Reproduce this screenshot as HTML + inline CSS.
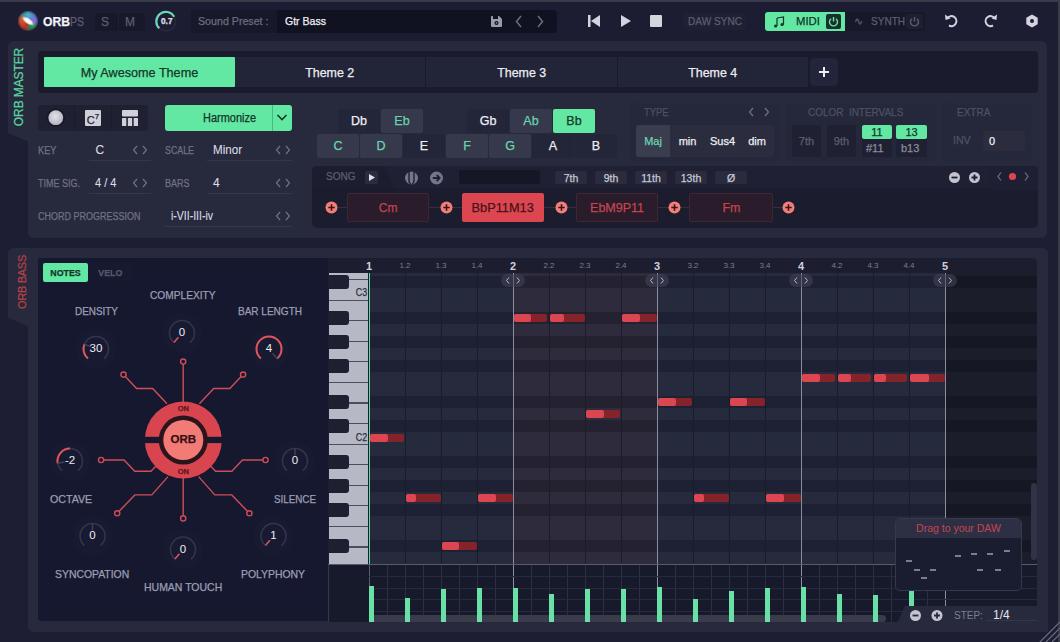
<!DOCTYPE html><html><head><meta charset="utf-8"><style>
*{margin:0;padding:0;box-sizing:border-box}
html,body{width:1060px;height:642px;overflow:hidden;background:#1d1e34;font-family:"Liberation Sans",sans-serif}
.a{position:absolute}
.t{position:absolute;white-space:nowrap;line-height:1;-webkit-text-stroke:0.25px currentColor}
.c span{-webkit-text-stroke:0.25px currentColor}
.c{display:flex;align-items:center;justify-content:center}
</style></head><body><div class="a" style="left:0px;top:0px;width:1060px;height:2px;background:#3a3b4a;"></div>
<div class="a" style="left:1058px;top:0px;width:2px;height:642px;background:#3a3b4a;"></div>
<div class="a" style="left:0px;top:2px;width:1058px;height:39px;background:#1c1d33;"></div>
<div class="a" style="left:18px;top:11px;width:20px;height:20px;border-radius:50%;overflow:hidden;background:conic-gradient(from 0deg,#4ab0c8 0deg,#6a7ad8 60deg,#8a70d0 95deg,#3a9a60 135deg,#2a8a48 160deg,#c03030 200deg,#d04a28 250deg,#c86040 290deg,#3aa0a8 330deg,#4ab0c8 360deg);box-shadow:inset 0 0 2px 1px rgba(20,20,40,0.6)"><div style="position:absolute;left:3px;top:7px;width:14px;height:6px;border-radius:50%;background:radial-gradient(ellipse at center,#ffffff 0,#f4f0f0 40%,rgba(255,255,255,0) 75%);transform:rotate(35deg)"></div></div>
<div class="t" id="fit0" style="left:42.5px;top:16.0px;height:12px;line-height:12px;color:#f2f2f6;font-size:12px;transform-origin:0 50%;transform:scaleX(1.0123);font-weight:bold">ORB</div>
<div class="t" id="fit1" style="left:69.5px;top:16.0px;height:12px;line-height:12px;color:#5c5e70;font-size:12px;transform-origin:0 50%;transform:scaleX(0.8741);">PS</div>
<div class="a" style="left:95px;top:13px;width:50px;height:18px;background:#17182a;border-radius:2px"></div>
<div class="a" style="left:118px;top:12px;width:1px;height:19px;background:#1f2033;"></div>
<div class="t" style="left:101px;top:15.5px;height:12px;line-height:12px;color:#5c5e70;font-size:12px;">S</div>
<div class="t" style="left:125px;top:15.5px;height:12px;line-height:12px;color:#5c5e70;font-size:12px;">M</div>
<svg class="a" style="left:154px;top:10px" width="24" height="24" viewBox="0 0 24 24">
<circle cx="12" cy="11.5" r="9.5" fill="none" stroke="#25273a" stroke-width="2"/>
<path d="M5.3 18.2 A9.5 9.5 0 1 1 20.2 6.8" fill="none" stroke="#6cd6b4" stroke-width="2.2"/>
</svg>
<div class="t" id="fit2" style="left:160.5px;top:17.25px;height:8.5px;line-height:8.5px;color:#e0e0ea;font-size:8.5px;transform-origin:0 50%;transform:scaleX(0.9723);font-weight:bold">0.7</div>
<div class="a" style="left:191px;top:10px;width:366px;height:23px;background:#101121;border-radius:4px"></div>
<div class="a" style="left:191px;top:10px;width:86px;height:23px;background:#17182a;border-radius:4px 0 0 4px"></div>
<div class="t" id="fit3" style="left:197.5px;top:16.0px;height:11px;line-height:11px;color:#6c6e80;font-size:11px;transform-origin:0 50%;transform:scaleX(0.9687);">Sound Preset :</div>
<div class="t" id="fit4" style="left:284.5px;top:16.0px;height:11px;line-height:11px;color:#eeeef4;font-size:11px;transform-origin:0 50%;transform:scaleX(0.9580);">Gtr Bass</div>
<svg class="a" style="left:490px;top:15px" width="13" height="13" viewBox="0 0 13 13">
<path d="M1 2 a1 1 0 0 1 1-1 h7 l3 3 v7 a1 1 0 0 1-1 1 h-9 a1 1 0 0 1-1-1z" fill="#9a9cab"/>
<rect x="3" y="1" width="5" height="3" fill="#101121"/>
<circle cx="6.5" cy="8" r="2" fill="#101121"/><circle cx="6.5" cy="8" r="0.8" fill="#9a9cab"/>
</svg>
<svg class="a" style="left:513px;top:14px" width="34" height="15" viewBox="0 0 34 15">
<path d="M8 2 L3.5 7.5 L8 13" fill="none" stroke="#6c6e80" stroke-width="1.5"/>
<path d="M25 2 L29.5 7.5 L25 13" fill="none" stroke="#6c6e80" stroke-width="1.5"/>
</svg>
<svg class="a" style="left:586px;top:13px" width="80" height="16" viewBox="0 0 80 16">
<rect x="2" y="2" width="2.5" height="12" fill="#d4d4de"/>
<path d="M14 2 L14 14 L5 8z" fill="#d4d4de"/>
<path d="M35 2 L45 8 L35 14z" fill="#d4d4de"/>
<rect x="64" y="2" width="12" height="12" rx="1" fill="#d4d4de"/>
</svg>
<div class="a" style="left:683px;top:13px;width:63px;height:17px;background:#1f2033;border-radius:2px"></div>
<div class="t" id="fit5" style="left:687.5px;top:16.25px;height:10.5px;line-height:10.5px;color:#5c5e70;font-size:10.5px;transform-origin:0 50%;transform:scaleX(0.9608);">DAW SYNC</div>
<div class="a" style="left:765px;top:12px;width:80px;height:19px;background:#62e8a2;border-radius:3px 0 0 3px"></div>
<div class="a" style="left:845px;top:12px;width:80px;height:19px;background:#17182a;border-radius:0 3px 3px 0"></div>
<svg class="a" style="left:773px;top:15px" width="12" height="13" viewBox="0 0 12 13">
<path d="M4 3 L10.5 2 L10.5 9.5 M4 3 L4 11" fill="none" stroke="#14352a" stroke-width="1.2"/>
<circle cx="2.6" cy="11" r="1.6" fill="#14352a"/><circle cx="9.1" cy="9.5" r="1.6" fill="#14352a"/>
</svg>
<div class="t" id="fit6" style="left:795.5px;top:16.0px;height:11px;line-height:11px;color:#14352a;font-size:11px;transform-origin:0 50%;transform:scaleX(1.0330);">MIDI</div>
<div class="a" style="left:826px;top:14px;width:15px;height:15px;background:#1c2e2c;border-radius:2px"></div>
<svg class="a" style="left:828px;top:16px" width="11" height="11" viewBox="0 0 11 11">
<path d="M3 2.8 A4 4 0 1 0 8 2.8" fill="none" stroke="#62e8a2" stroke-width="1.4"/><path d="M5.5 1 V5.5" stroke="#62e8a2" stroke-width="1.4"/>
</svg>
<div class="t" style="left:854px;top:16.0px;height:11px;line-height:11px;color:#5c5e70;font-size:11px;">∿</div>
<div class="t" id="fit7" style="left:870.5px;top:16.0px;height:11px;line-height:11px;color:#5c5e70;font-size:11px;transform-origin:0 50%;transform:scaleX(0.9120);">SYNTH</div>
<div class="a" style="left:906px;top:14px;width:17px;height:15px;background:#1e1f31;border-radius:2px"></div>
<svg class="a" style="left:909px;top:16px" width="11" height="11" viewBox="0 0 11 11">
<path d="M3 2.8 A4 4 0 1 0 8 2.8" fill="none" stroke="#5c5e70" stroke-width="1.4"/><path d="M5.5 1 V5.5" stroke="#5c5e70" stroke-width="1.4"/>
</svg>
<svg class="a" style="left:943px;top:12px" width="16" height="16" viewBox="0 0 16 16">
<path d="M4.5 6 A5 5 0 1 1 6 13.5" fill="none" stroke="#d4d4de" stroke-width="2"/><path d="M2 2.5 L2.5 8 L7.5 6.5z" fill="#d4d4de"/>
</svg>
<svg class="a" style="left:983px;top:12px" width="16" height="16" viewBox="0 0 16 16">
<path d="M11.5 6 A5 5 0 1 0 10 13.5" fill="none" stroke="#d4d4de" stroke-width="2"/><path d="M14 2.5 L13.5 8 L8.5 6.5z" fill="#d4d4de"/>
</svg>
<svg class="a" style="left:1024px;top:13px" width="16" height="16" viewBox="0 0 16 16">
<path d="M8 1.5 L13.7 4.8 V11.2 L8 14.5 L2.3 11.2 V4.8z" fill="#d4d4de"/><circle cx="8" cy="8" r="2" fill="#1b1c2e"/>
</svg>
<div class="a" style="left:28px;top:41px;width:1019px;height:197px;background:#272a3c;border-radius:0 6px 6px 6px"></div>
<div class="a" style="left:8px;top:41px;width:21px;height:101px;background:#272a3c;border-radius:6px 0 0 0;clip-path:polygon(0 0,100% 0,100% 100%,0 91%)"></div>
<div class="t" style="left:19.2px;top:87px;transform:translate(-50%,-50%) rotate(-90deg);color:#5ad4a0;font-size:12px;letter-spacing:-0.1px">ORB MASTER</div>
<div class="a" style="left:38px;top:51px;width:1000px;height:42px;background:#1a1b2c;border-radius:4px"></div>
<div class="a c" style="left:44px;top:57px;width:191px;height:30px;background:#62e8a2;color:#14352a;font-size:13px;border-radius:1px"><span id="fit8" style="display:inline-block;transform:scaleX(0.9718);margin-top:1px">My Awesome Theme</span></div>
<div class="a c" style="left:235px;top:57px;width:190px;height:30px;background:#222437;color:#eeeef4;font-size:13px;"><span id="fit9" style="display:inline-block;transform:scaleX(0.9549);margin-top:1px">Theme 2</span></div>
<div class="a c" style="left:426px;top:57px;width:191px;height:30px;background:#222437;color:#eeeef4;font-size:13px;"><span id="fit10" style="display:inline-block;transform:scaleX(0.9549);margin-top:1px">Theme 3</span></div>
<div class="a c" style="left:618px;top:57px;width:190px;height:30px;background:#222437;color:#eeeef4;font-size:13px;"><span id="fit11" style="display:inline-block;transform:scaleX(0.9549);margin-top:1px">Theme 4</span></div>
<div class="a" style="left:425px;top:57px;width:1px;height:29px;background:#18192a;"></div>
<div class="a" style="left:617px;top:57px;width:1px;height:29px;background:#18192a;"></div>
<div class="a" style="left:810px;top:58px;width:28px;height:28px;background:#23263a;border-radius:4px"></div>
<svg class="a" style="left:818px;top:66px" width="12" height="12" viewBox="0 0 12 12"><path d="M1 6 H11 M6 1 V11" stroke="#ececf4" stroke-width="2"/></svg>
<div class="a" style="left:38px;top:105px;width:110px;height:26px;background:#1f2031;border-radius:3px"></div>
<div class="a" style="left:74px;top:105px;width:1px;height:26px;background:#1a1b2b;"></div>
<div class="a" style="left:111px;top:105px;width:1px;height:26px;background:#1a1b2b;"></div>
<svg class="a" style="left:45px;top:107px" width="22" height="22" viewBox="0 0 22 22"><circle cx="10.8" cy="10.7" r="9.2" fill="#171828"/><defs><radialGradient id="cg" cx="0.45" cy="0.4" r="0.6"><stop offset="0" stop-color="#e2e2ea"/><stop offset="1" stop-color="#b4b4c2"/></radialGradient></defs><circle cx="10.8" cy="10.7" r="7.4" fill="url(#cg)"/></svg>
<div class="a c" style="left:85px;top:110px;width:16px;height:16px;background:#d0d0dc;color:#1a1b2c;font-size:11px;border-radius:1px"><span style="margin-top:1px">C<sup style="font-size:8px">7</sup></span></div>
<svg class="a" style="left:122px;top:110px" width="16" height="16" viewBox="0 0 16 16">
<rect x="0" y="0" width="16" height="6.5" rx="1" fill="#d0d0dc"/>
<rect x="0" y="8" width="4.3" height="8" rx="0.5" fill="#d0d0dc"/>
<rect x="5.85" y="8" width="4.3" height="8" fill="#d0d0dc"/>
<rect x="11.7" y="8" width="4.3" height="8" rx="0.5" fill="#d0d0dc"/>
</svg>
<div class="a" style="left:165px;top:105px;width:127px;height:26px;background:#62e8a2;border-radius:3px"></div>
<div class="a" style="left:272px;top:105px;width:1px;height:26px;background:#4ab884;"></div>
<div class="t" id="fit12" style="left:202.5px;top:112.0px;height:12px;line-height:12px;color:#14352a;font-size:12px;transform-origin:0 50%;transform:scaleX(0.9133);">Harmonize</div>
<svg class="a" style="left:276px;top:113px" width="12" height="9" viewBox="0 0 12 9"><path d="M1.5 2 L6 6.5 L10.5 2" fill="none" stroke="#14352a" stroke-width="1.6"/></svg>
<div class="t" id="fit13" style="left:37.5px;top:146.0px;height:10px;line-height:10px;color:#6f7184;font-size:10px;transform-origin:0 50%;transform:scaleX(0.9243);">KEY</div>
<div class="t" style="left:95.5px;top:144.0px;height:12px;line-height:12px;color:#dcdce6;font-size:12px;-webkit-text-stroke:0.1px currentColor">C</div>
<svg class="a" style="left:132px;top:144px" width="16" height="12" viewBox="0 0 16 12"><path d="M5 2 L1.5 6 L5 10" fill="none" stroke="#6f7184" stroke-width="1.2"/><path d="M11 2 L14.5 6 L11 10" fill="none" stroke="#6f7184" stroke-width="1.2"/></svg>
<div class="a" style="left:89px;top:160px;width:62px;height:1px;background:#34364a;"></div>
<div class="t" id="fit14" style="left:164.5px;top:146.0px;height:10px;line-height:10px;color:#6f7184;font-size:10px;transform-origin:0 50%;transform:scaleX(0.8842);">SCALE</div>
<div class="t" id="fit15" style="left:212.5px;top:144.0px;height:12px;line-height:12px;color:#dcdce6;font-size:12px;transform-origin:0 50%;transform:scaleX(0.9662);-webkit-text-stroke:0.1px currentColor">Minor</div>
<svg class="a" style="left:275px;top:144px" width="16" height="12" viewBox="0 0 16 12"><path d="M5 2 L1.5 6 L5 10" fill="none" stroke="#6f7184" stroke-width="1.2"/><path d="M11 2 L14.5 6 L11 10" fill="none" stroke="#6f7184" stroke-width="1.2"/></svg>
<div class="a" style="left:207px;top:160px;width:85px;height:1px;background:#34364a;"></div>
<div class="t" id="fit16" style="left:37.5px;top:179.0px;height:10px;line-height:10px;color:#6f7184;font-size:10px;transform-origin:0 50%;transform:scaleX(0.8999);">TIME SIG.</div>
<div class="t" id="fit17" style="left:95.0px;top:177.0px;height:12px;line-height:12px;color:#dcdce6;font-size:12px;transform-origin:0 50%;transform:scaleX(0.9204);-webkit-text-stroke:0.1px currentColor">4 / 4</div>
<svg class="a" style="left:132px;top:177px" width="16" height="12" viewBox="0 0 16 12"><path d="M5 2 L1.5 6 L5 10" fill="none" stroke="#6f7184" stroke-width="1.2"/><path d="M11 2 L14.5 6 L11 10" fill="none" stroke="#6f7184" stroke-width="1.2"/></svg>
<div class="a" style="left:89px;top:193px;width:62px;height:1px;background:#34364a;"></div>
<div class="t" id="fit18" style="left:165.0px;top:179.0px;height:10px;line-height:10px;color:#6f7184;font-size:10px;transform-origin:0 50%;transform:scaleX(0.8996);">BARS</div>
<div class="t" style="left:213px;top:177.0px;height:12px;line-height:12px;color:#dcdce6;font-size:12px;-webkit-text-stroke:0.1px currentColor">4</div>
<svg class="a" style="left:275px;top:177px" width="16" height="12" viewBox="0 0 16 12"><path d="M5 2 L1.5 6 L5 10" fill="none" stroke="#6f7184" stroke-width="1.2"/><path d="M11 2 L14.5 6 L11 10" fill="none" stroke="#6f7184" stroke-width="1.2"/></svg>
<div class="a" style="left:207px;top:193px;width:85px;height:1px;background:#34364a;"></div>
<div class="t" id="fit19" style="left:37.5px;top:212.0px;height:10px;line-height:10px;color:#6f7184;font-size:10px;transform-origin:0 50%;transform:scaleX(0.8999);">CHORD PROGRESSION</div>
<div class="t" id="fit20" style="left:171.0px;top:210.0px;height:12px;line-height:12px;color:#dcdce6;font-size:12px;transform-origin:0 50%;transform:scaleX(0.8750);-webkit-text-stroke:0.1px currentColor">i-VII-III-iv</div>
<svg class="a" style="left:275px;top:210px" width="16" height="12" viewBox="0 0 16 12"><path d="M5 2 L1.5 6 L5 10" fill="none" stroke="#6f7184" stroke-width="1.2"/><path d="M11 2 L14.5 6 L11 10" fill="none" stroke="#6f7184" stroke-width="1.2"/></svg>
<div class="a" style="left:165px;top:226px;width:127px;height:1px;background:#34364a;"></div>
<div class="a c" style="left:338px;top:109px;width:42px;height:24px;background:#232539;color:#eeeef4;font-size:12.5px;border-radius:2px"><span style="">Db</span></div>
<div class="a c" style="left:381px;top:109px;width:42px;height:24px;background:#36384b;color:#6ad4b0;font-size:12.5px;border-radius:2px"><span style="">Eb</span></div>
<div class="a c" style="left:467px;top:109px;width:42px;height:24px;background:#232539;color:#eeeef4;font-size:12.5px;border-radius:2px"><span style="">Gb</span></div>
<div class="a c" style="left:510px;top:109px;width:42px;height:24px;background:#36384b;color:#6ad4b0;font-size:12.5px;border-radius:2px"><span style="">Ab</span></div>
<div class="a c" style="left:553px;top:109px;width:42px;height:24px;background:#62e8a2;color:#14352a;font-size:12.5px;border-radius:2px"><span style="">Bb</span></div>
<div class="a c" style="left:317px;top:134px;width:42px;height:24px;background:#36384b;color:#6ad4b0;font-size:12.5px;border-radius:2px"><span style="">C</span></div>
<div class="a c" style="left:360px;top:134px;width:42px;height:24px;background:#36384b;color:#6ad4b0;font-size:12.5px;border-radius:2px"><span style="">D</span></div>
<div class="a c" style="left:403px;top:134px;width:42px;height:24px;background:#232539;color:#eeeef4;font-size:12.5px;border-radius:2px"><span style="">E</span></div>
<div class="a c" style="left:446px;top:134px;width:42px;height:24px;background:#36384b;color:#6ad4b0;font-size:12.5px;border-radius:2px"><span style="">F</span></div>
<div class="a c" style="left:489px;top:134px;width:42px;height:24px;background:#36384b;color:#6ad4b0;font-size:12.5px;border-radius:2px"><span style="">G</span></div>
<div class="a c" style="left:532px;top:134px;width:42px;height:24px;background:#232539;color:#eeeef4;font-size:12.5px;border-radius:2px"><span style="">A</span></div>
<div class="a c" style="left:575px;top:134px;width:42px;height:24px;background:#232539;color:#eeeef4;font-size:12.5px;border-radius:2px"><span style="">B</span></div>
<div class="a" style="left:630px;top:103px;width:150px;height:58px;background:#25273a;border-radius:4px"></div>
<div class="t" id="fit21" style="left:644.0px;top:108.0px;height:10px;line-height:10px;color:#4e5064;font-size:10px;transform-origin:0 50%;transform:scaleX(0.9378);">TYPE</div>
<svg class="a" style="left:746px;top:106px" width="26" height="12" viewBox="0 0 26 12"><path d="M7 2 L3.5 6 L7 10" fill="none" stroke="#6f7184" stroke-width="1.2"/><path d="M19 2 L22.5 6 L19 10" fill="none" stroke="#6f7184" stroke-width="1.2"/></svg>
<div class="a" style="left:636px;top:125px;width:138px;height:32px;background:#2b2d3e;border-radius:3px"></div>
<div class="a c" style="left:636px;top:125px;width:34px;height:32px;background:#3a3d4e;color:#6ad4b0;font-size:11px;border-radius:3px 0 0 3px"><span style="">Maj</span></div>
<div class="a c" style="left:670px;top:125px;width:35px;height:32px;background:transparent;color:#eeeef4;font-size:11px;"><span style="">min</span></div>
<div class="a c" style="left:705px;top:125px;width:35px;height:32px;background:transparent;color:#eeeef4;font-size:11px;"><span style="">Sus4</span></div>
<div class="a c" style="left:740px;top:125px;width:34px;height:32px;background:transparent;color:#eeeef4;font-size:11px;"><span style="">dim</span></div>
<div class="a" style="left:786px;top:103px;width:150px;height:58px;background:#25273a;border-radius:4px"></div>
<div class="t" id="fit22" style="left:808.2px;top:108.0px;height:10px;line-height:10px;color:#4e5064;font-size:10px;transform-origin:0 50%;transform:scaleX(0.9950);">COLOR&nbsp; INTERVALS</div>
<div class="a c" style="left:792px;top:125px;width:29px;height:32px;background:#1f2133;color:#5c5e70;font-size:11px;border-radius:2px"><span style="">7th</span></div>
<div class="a c" style="left:827px;top:125px;width:29px;height:32px;background:#1f2133;color:#5c5e70;font-size:11px;border-radius:2px"><span style="">9th</span></div>
<div class="a" style="left:862px;top:125px;width:30px;height:32px;background:#1f2133;border-radius:2px"></div>
<div class="a c" style="left:862px;top:125px;width:30px;height:14px;background:#62e8a2;color:#14352a;font-size:11px;border-radius:2px"><span style="">11</span></div>
<div class="t" style="left:866px;top:142.5px;height:11px;line-height:11px;color:#8a8c9c;font-size:11px;">#11</div>
<div class="a" style="left:896px;top:125px;width:31px;height:32px;background:#1f2133;border-radius:2px"></div>
<div class="a c" style="left:896px;top:125px;width:31px;height:14px;background:#62e8a2;color:#14352a;font-size:11px;border-radius:2px"><span style="">13</span></div>
<div class="t" style="left:901px;top:142.5px;height:11px;line-height:11px;color:#8a8c9c;font-size:11px;">b13</div>
<div class="a" style="left:942px;top:103px;width:90px;height:58px;background:#25273a;border-radius:4px"></div>
<div class="t" id="fit23" style="left:956.8px;top:108.0px;height:10px;line-height:10px;color:#4e5064;font-size:10px;transform-origin:0 50%;transform:scaleX(1.0017);">EXTRA</div>
<div class="t" id="fit24" style="left:953.1px;top:136.0px;height:10px;line-height:10px;color:#4e5064;font-size:10px;transform-origin:0 50%;transform:scaleX(1.0617);">INV</div>
<div class="a" style="left:983px;top:131px;width:42px;height:20px;background:#2b2d3e;border-radius:3px"></div>
<div class="t" style="left:989px;top:135.5px;height:11px;line-height:11px;color:#eeeef4;font-size:11px;">0</div>
<div class="a" style="left:312px;top:166px;width:726px;height:62px;background:#1b1c2d;border-radius:5px"></div>
<div class="a" style="left:312px;top:166px;width:726px;height:22px;background:#1f2033;border-radius:5px 5px 0 0"></div>
<div class="a" style="left:312px;top:166px;width:82px;height:22px;background:#1c1d2f;border-radius:5px 0 0 0;clip-path:polygon(0 0,88% 0,100% 100%,0 100%)"></div>
<div class="t" id="fit25" style="left:325.5px;top:172.0px;height:10px;line-height:10px;color:#5c5e70;font-size:10px;transform-origin:0 50%;transform:scaleX(1.0016);">SONG</div>
<div class="a" style="left:365px;top:171px;width:13px;height:13px;background:#2b2d3e;border-radius:2px"></div>
<svg class="a" style="left:367px;top:173px" width="9" height="9" viewBox="0 0 9 9"><path d="M2 1 L8 4.5 L2 8z" fill="#e0e0ea"/></svg>
<svg class="a" style="left:403px;top:170px" width="17" height="16" viewBox="0 0 17 16">
<circle cx="8.5" cy="8" r="6.5" fill="#74768a"/><path d="M6 1 V11.5 L7.8 14.5 M11 1 V11.5 L9.2 14.5" fill="none" stroke="#1f2033" stroke-width="1.4"/>
</svg>
<svg class="a" style="left:428px;top:170px" width="17" height="16" viewBox="0 0 17 16">
<circle cx="8.5" cy="8" r="6.5" fill="#74768a"/><path d="M4.8 8 H11.5 M8.7 5 L11.7 8 L8.7 11" fill="none" stroke="#1f2033" stroke-width="1.8"/>
</svg>
<div class="a" style="left:459px;top:170px;width:81px;height:14px;background:#161726;border-radius:2px"></div>
<div class="a c" style="left:555px;top:171px;width:32px;height:13px;background:#2a2c3e;color:#c8c8d6;font-size:10.5px;border-radius:2px"><span style="">7th</span></div>
<div class="a c" style="left:595px;top:171px;width:32px;height:13px;background:#2a2c3e;color:#c8c8d6;font-size:10.5px;border-radius:2px"><span style="">9th</span></div>
<div class="a c" style="left:635px;top:171px;width:32px;height:13px;background:#2a2c3e;color:#c8c8d6;font-size:10.5px;border-radius:2px"><span style="">11th</span></div>
<div class="a c" style="left:675px;top:171px;width:32px;height:13px;background:#2a2c3e;color:#c8c8d6;font-size:10.5px;border-radius:2px"><span style="">13th</span></div>
<div class="a c" style="left:715px;top:171px;width:32px;height:13px;background:#2a2c3e;color:#c8c8d6;font-size:10.5px;border-radius:2px"><span style="">Ø</span></div>
<svg class="a" style="left:948px;top:171px" width="33" height="13" viewBox="0 0 33 13">
<circle cx="6.5" cy="6.5" r="5.5" fill="#c4c4d0"/><path d="M3.5 6.5 H9.5" stroke="#1c1d2e" stroke-width="1.8"/>
<circle cx="26.5" cy="6.5" r="5.5" fill="#c4c4d0"/><path d="M23.5 6.5 H29.5 M26.5 3.5 V9.5" stroke="#1c1d2e" stroke-width="1.8"/>
</svg>
<div class="a" style="left:989px;top:166px;width:49px;height:24px;background:#1e1f32;border-radius:0 5px 0 4px"></div>
<svg class="a" style="left:994px;top:170px" width="40" height="13" viewBox="0 0 40 13">
<path d="M7 2.5 L4 6.5 L7 10.5" fill="none" stroke="#6f7184" stroke-width="1.2"/>
<circle cx="18.5" cy="6.5" r="3.6" fill="#e0454f"/>
<path d="M31 2.5 L34 6.5 L31 10.5" fill="none" stroke="#6f7184" stroke-width="1.2"/>
</svg>
<div class="a" style="left:331px;top:207px;width:457px;height:1px;background:#3a2c38;"></div>
<svg class="a" style="left:324.5px;top:201px" width="13" height="13" viewBox="0 0 13 13"><circle cx="6.5" cy="6.5" r="6" fill="#f27e78"/><path d="M3.3 6.5 H9.7 M6.5 3.3 V9.7" stroke="#3a1418" stroke-width="1.6"/></svg>
<svg class="a" style="left:439.5px;top:201px" width="13" height="13" viewBox="0 0 13 13"><circle cx="6.5" cy="6.5" r="6" fill="#f27e78"/><path d="M3.3 6.5 H9.7 M6.5 3.3 V9.7" stroke="#3a1418" stroke-width="1.6"/></svg>
<svg class="a" style="left:554.5px;top:201px" width="13" height="13" viewBox="0 0 13 13"><circle cx="6.5" cy="6.5" r="6" fill="#f27e78"/><path d="M3.3 6.5 H9.7 M6.5 3.3 V9.7" stroke="#3a1418" stroke-width="1.6"/></svg>
<svg class="a" style="left:667.5px;top:201px" width="13" height="13" viewBox="0 0 13 13"><circle cx="6.5" cy="6.5" r="6" fill="#f27e78"/><path d="M3.3 6.5 H9.7 M6.5 3.3 V9.7" stroke="#3a1418" stroke-width="1.6"/></svg>
<svg class="a" style="left:781.5px;top:201px" width="13" height="13" viewBox="0 0 13 13"><circle cx="6.5" cy="6.5" r="6" fill="#f27e78"/><path d="M3.3 6.5 H9.7 M6.5 3.3 V9.7" stroke="#3a1418" stroke-width="1.6"/></svg>
<div class="a c" style="left:347px;top:193px;width:82px;height:29px;background:#2a1c2a;color:#c2454e;font-size:13px;border-radius:2px;box-shadow:inset 0 0 0 1px #3e2633"><span id="fit26" style="display:inline-block;transform:scaleX(0.9249);">Cm</span></div>
<div class="a c" style="left:462px;top:193px;width:82px;height:29px;background:#dc4650;color:#4a1218;font-size:13px;border-radius:2px"><span id="fit27" style="display:inline-block;transform:scaleX(0.9817);">BbP11M13</span></div>
<div class="a c" style="left:576px;top:193px;width:82px;height:29px;background:#2a1c2a;color:#c2454e;font-size:13px;border-radius:2px;box-shadow:inset 0 0 0 1px #3e2633"><span id="fit28" style="display:inline-block;transform:scaleX(0.9619);">EbM9P11</span></div>
<div class="a c" style="left:689px;top:193px;width:84px;height:29px;background:#2a1c2a;color:#c2454e;font-size:13px;border-radius:2px;box-shadow:inset 0 0 0 1px #3e2633"><span id="fit29" style="display:inline-block;transform:scaleX(0.9584);">Fm</span></div>
<div class="a" style="left:28px;top:248px;width:1020px;height:384px;background:#272a3c;border-radius:0 6px 6px 6px"></div>
<div class="a" style="left:8px;top:248px;width:21px;height:79px;background:#272a3c;border-radius:6px 0 0 0;clip-path:polygon(0 0,100% 0,100% 100%,0 88%)"></div>
<div class="t" style="left:22.2px;top:282px;transform:translate(-50%,-50%) rotate(-90deg);color:#b8404a;font-size:11px;letter-spacing:-0.3px">ORB BASS</div>
<div class="a" style="left:38px;top:258px;width:292px;height:363px;background:#161830;border-radius:1px 0 0 3px"></div>
<div class="a c" style="left:43px;top:263px;width:45px;height:19px;background:#62e8a2;color:#14352a;font-size:9px;border-radius:2px"><span id="fit30" style="display:inline-block;transform:scaleX(0.9834);font-weight:bold;margin-top:1px">NOTES</span></div>
<div class="a c" style="left:88px;top:263px;width:45px;height:19px;background:#171930;color:#56586a;font-size:9px;"><span id="fit31" style="display:inline-block;transform:scaleX(0.9790);font-weight:bold;margin-top:1px">VELO</span></div>
<div class="t" id="fit32" style="left:149.5px;top:289.75px;line-height:10.5px;color:#9c9eb2;font-size:10.5px;transform-origin:0 50%;transform:scaleX(0.9677)">COMPLEXITY</div>
<div class="t" id="fit33" style="left:74.5px;top:305.75px;line-height:10.5px;color:#9c9eb2;font-size:10.5px;transform-origin:0 50%;transform:scaleX(0.9447)">DENSITY</div>
<div class="t" id="fit34" style="left:237.5px;top:305.75px;line-height:10.5px;color:#9c9eb2;font-size:10.5px;transform-origin:0 50%;transform:scaleX(0.9537)">BAR LENGTH</div>
<div class="t" id="fit35" style="left:49.8px;top:493.75px;line-height:10.5px;color:#9c9eb2;font-size:10.5px;transform-origin:0 50%;transform:scaleX(1.0114)">OCTAVE</div>
<div class="t" id="fit36" style="left:274.2px;top:493.75px;line-height:10.5px;color:#9c9eb2;font-size:10.5px;transform-origin:0 50%;transform:scaleX(0.9346)">SILENCE</div>
<div class="t" id="fit37" style="left:55.3px;top:568.75px;line-height:10.5px;color:#9c9eb2;font-size:10.5px;transform-origin:0 50%;transform:scaleX(0.9910)">SYNCOPATION</div>
<div class="t" id="fit38" style="left:241.3px;top:568.75px;line-height:10.5px;color:#9c9eb2;font-size:10.5px;transform-origin:0 50%;transform:scaleX(0.9910)">POLYPHONY</div>
<div class="t" id="fit39" style="left:144.2px;top:581.75px;line-height:10.5px;color:#9c9eb2;font-size:10.5px;transform-origin:0 50%;transform:scaleX(0.9978)">HUMAN TOUCH</div>
<svg class="a" style="left:0;top:0" width="330" height="642"><circle cx="182" cy="333" r="20" fill="#181a32"/><path d="M173.97 342.58 A12.5 12.5 0 1 1 190.03 342.58" fill="none" stroke="#33354b" stroke-width="1.6"/><path d="M178.38 337.31 L173.97 342.58" stroke="#e0545c" stroke-width="1.5"/></svg>
<div class="t" style="left:182px;top:333px;transform:translate(-50%,-50%);color:#ececf2;font-size:11.5px;-webkit-text-stroke:0">0</div>
<svg class="a" style="left:0;top:0" width="330" height="642"><circle cx="96" cy="349" r="20" fill="#181a32"/><path d="M87.97 358.58 A12.5 12.5 0 1 1 104.03 358.58" fill="none" stroke="#33354b" stroke-width="1.6"/><path d="M87.97 358.58 A12.5 12.5 0 0 1 84.48 344.16" fill="none" stroke="#e0545c" stroke-width="2"/><path d="M90.81 346.82 L84.48 344.16" stroke="#3e4056" stroke-width="1.5"/></svg>
<div class="t" style="left:96px;top:349px;transform:translate(-50%,-50%);color:#ececf2;font-size:11.5px;-webkit-text-stroke:0">30</div>
<svg class="a" style="left:0;top:0" width="330" height="642"><circle cx="269" cy="349" r="20" fill="#181a32"/><path d="M260.97 358.58 A12.5 12.5 0 1 1 277.03 358.58" fill="none" stroke="#33354b" stroke-width="1.6"/><path d="M260.97 358.58 A12.5 12.5 0 1 1 277.03 358.58" fill="none" stroke="#e0545c" stroke-width="2"/><path d="M272.62 353.31 L277.03 358.58" stroke="#3e4056" stroke-width="1.5"/></svg>
<div class="t" style="left:269px;top:349px;transform:translate(-50%,-50%);color:#ececf2;font-size:11.5px;-webkit-text-stroke:0">4</div>
<svg class="a" style="left:0;top:0" width="330" height="642"><circle cx="70" cy="461" r="20" fill="#181a32"/><path d="M61.97 470.58 A12.5 12.5 0 1 1 78.03 470.58" fill="none" stroke="#33354b" stroke-width="1.6"/><path d="M57.72 463.34 A12.5 12.5 0 0 1 70.00 448.50" fill="none" stroke="#e0545c" stroke-width="2"/><path d="M64.47 462.05 L57.72 463.34" stroke="#3e4056" stroke-width="1.5"/></svg>
<div class="t" style="left:70px;top:461px;transform:translate(-50%,-50%);color:#ececf2;font-size:11.5px;-webkit-text-stroke:0">-2</div>
<svg class="a" style="left:0;top:0" width="330" height="642"><circle cx="295" cy="461" r="20" fill="#181a32"/><path d="M286.97 470.58 A12.5 12.5 0 1 1 303.03 470.58" fill="none" stroke="#33354b" stroke-width="1.6"/><path d="M295.00 455.38 L295.00 448.50" stroke="#3e4056" stroke-width="1.5"/></svg>
<div class="t" style="left:295px;top:461px;transform:translate(-50%,-50%);color:#ececf2;font-size:11.5px;-webkit-text-stroke:0">0</div>
<svg class="a" style="left:0;top:0" width="330" height="642"><circle cx="92.5" cy="536" r="20" fill="#181a32"/><path d="M84.47 545.58 A12.5 12.5 0 1 1 100.53 545.58" fill="none" stroke="#33354b" stroke-width="1.6"/><path d="M92.50 530.38 L92.50 523.50" stroke="#3e4056" stroke-width="1.5"/></svg>
<div class="t" style="left:92.5px;top:536px;transform:translate(-50%,-50%);color:#ececf2;font-size:11.5px;-webkit-text-stroke:0">0</div>
<svg class="a" style="left:0;top:0" width="330" height="642"><circle cx="183" cy="549.5" r="20" fill="#181a32"/><path d="M174.97 559.08 A12.5 12.5 0 1 1 191.03 559.08" fill="none" stroke="#33354b" stroke-width="1.6"/><path d="M179.38 553.81 L174.97 559.08" stroke="#e0545c" stroke-width="1.5"/></svg>
<div class="t" style="left:183px;top:549.5px;transform:translate(-50%,-50%);color:#ececf2;font-size:11.5px;-webkit-text-stroke:0">0</div>
<svg class="a" style="left:0;top:0" width="330" height="642"><circle cx="273.5" cy="536" r="20" fill="#181a32"/><path d="M265.47 545.58 A12.5 12.5 0 1 1 281.53 545.58" fill="none" stroke="#33354b" stroke-width="1.6"/><path d="M269.88 540.31 L265.47 545.58" stroke="#e0545c" stroke-width="1.5"/></svg>
<div class="t" style="left:273.5px;top:536px;transform:translate(-50%,-50%);color:#ececf2;font-size:11.5px;-webkit-text-stroke:0">1</div>
<svg class="a" style="left:0;top:0" width="330" height="642"><path d="M183.2 361.6 V402" fill="none" stroke="#cf4d56" stroke-width="1.4"/><path d="M123.5 374.6 L136.6 388.5 H152.7 L167 403.8" fill="none" stroke="#cf4d56" stroke-width="1.4"/><path d="M243.1 374.6 L229.8 388.5 H213.7 L199.4 403.8" fill="none" stroke="#cf4d56" stroke-width="1.4"/><path d="M101.1 460 H124 L134.8 471.2 H151 L156 466" fill="none" stroke="#cf4d56" stroke-width="1.4"/><path d="M265.5 460 H242.5 L231.8 471.2 H215.6 L210.6 466" fill="none" stroke="#cf4d56" stroke-width="1.4"/><path d="M117.2 513.3 L134.8 494.9 H151.8 L168 476.6" fill="none" stroke="#cf4d56" stroke-width="1.4"/><path d="M183.2 518.4 V478" fill="none" stroke="#cf4d56" stroke-width="1.4"/><path d="M249.4 513.3 L231.8 494.9 H214.8 L198.6 476.6" fill="none" stroke="#cf4d56" stroke-width="1.4"/><circle cx="183.2" cy="361.6" r="2.6" fill="#161830" stroke="#cf4d56" stroke-width="1.4"/><circle cx="123.5" cy="374.6" r="2.6" fill="#161830" stroke="#cf4d56" stroke-width="1.4"/><circle cx="243.1" cy="374.6" r="2.6" fill="#161830" stroke="#cf4d56" stroke-width="1.4"/><circle cx="101.1" cy="460" r="2.6" fill="#161830" stroke="#cf4d56" stroke-width="1.4"/><circle cx="265.5" cy="460" r="2.6" fill="#161830" stroke="#cf4d56" stroke-width="1.4"/><circle cx="117.2" cy="513.3" r="2.6" fill="#161830" stroke="#cf4d56" stroke-width="1.4"/><circle cx="183.2" cy="518.4" r="2.6" fill="#161830" stroke="#cf4d56" stroke-width="1.4"/><circle cx="249.4" cy="513.3" r="2.6" fill="#161830" stroke="#cf4d56" stroke-width="1.4"/><circle cx="183.3" cy="440" r="38.5" fill="#d9454e"/><rect x="140" y="436.8" width="90" height="6.3" fill="#161830"/><circle cx="183.3" cy="440" r="24.5" fill="#2a141e"/><circle cx="183.3" cy="440" r="20" fill="#f27b76"/></svg>
<div class="t" style="left:183.3px;top:440px;transform:translate(-50%,-50%);color:#3a0e16;font-size:11.5px;font-weight:bold">ORB</div>
<div class="t" style="left:183.3px;top:408.5px;transform:translate(-50%,-50%);color:#5a1a22;font-size:7.5px;font-weight:bold">ON</div>
<div class="t" style="left:183.3px;top:472px;transform:translate(-50%,-50%);color:#5a1a22;font-size:7.5px;font-weight:bold">ON</div>
<div class="a" style="left:328px;top:258px;width:709px;height:364px;background:#1c1d2f;border-radius:0 5px 0 0;overflow:hidden">
<div class="a" style="left:41px;top:15px;width:144px;height:3px;background:#262a3d"></div>
<div class="a" style="left:41px;top:18px;width:144px;height:12px;background:#1e2133"></div>
<div class="a" style="left:41px;top:30px;width:144px;height:12px;background:#262a3d"></div>
<div class="a" style="left:41px;top:41.5px;width:144px;height:1px;background:#202335"></div>
<div class="a" style="left:41px;top:42px;width:144px;height:12px;background:#262a3d"></div>
<div class="a" style="left:41px;top:54px;width:144px;height:12px;background:#1e2133"></div>
<div class="a" style="left:41px;top:66px;width:144px;height:12px;background:#262a3d"></div>
<div class="a" style="left:41px;top:78px;width:144px;height:12px;background:#1e2133"></div>
<div class="a" style="left:41px;top:90px;width:144px;height:12px;background:#262a3d"></div>
<div class="a" style="left:41px;top:102px;width:144px;height:12px;background:#1e2133"></div>
<div class="a" style="left:41px;top:114px;width:144px;height:12px;background:#262a3d"></div>
<div class="a" style="left:41px;top:125.5px;width:144px;height:1px;background:#202335"></div>
<div class="a" style="left:41px;top:126px;width:144px;height:12px;background:#262a3d"></div>
<div class="a" style="left:41px;top:138px;width:144px;height:12px;background:#1e2133"></div>
<div class="a" style="left:41px;top:150px;width:144px;height:12px;background:#262a3d"></div>
<div class="a" style="left:41px;top:162px;width:144px;height:12px;background:#1e2133"></div>
<div class="a" style="left:41px;top:174px;width:144px;height:12px;background:#262a3d"></div>
<div class="a" style="left:41px;top:185.5px;width:144px;height:1px;background:#202335"></div>
<div class="a" style="left:41px;top:186px;width:144px;height:12px;background:#262a3d"></div>
<div class="a" style="left:41px;top:198px;width:144px;height:12px;background:#1e2133"></div>
<div class="a" style="left:41px;top:210px;width:144px;height:12px;background:#262a3d"></div>
<div class="a" style="left:41px;top:222px;width:144px;height:12px;background:#1e2133"></div>
<div class="a" style="left:41px;top:234px;width:144px;height:12px;background:#262a3d"></div>
<div class="a" style="left:41px;top:246px;width:144px;height:12px;background:#1e2133"></div>
<div class="a" style="left:41px;top:258px;width:144px;height:12px;background:#262a3d"></div>
<div class="a" style="left:41px;top:269.5px;width:144px;height:1px;background:#202335"></div>
<div class="a" style="left:41px;top:270px;width:144px;height:12px;background:#262a3d"></div>
<div class="a" style="left:41px;top:282px;width:144px;height:12px;background:#1e2133"></div>
<div class="a" style="left:41px;top:294px;width:144px;height:12px;background:#262a3d"></div>
<div class="a" style="left:185px;top:15px;width:144px;height:3px;background:#2d2b3c"></div>
<div class="a" style="left:185px;top:18px;width:144px;height:12px;background:#242131"></div>
<div class="a" style="left:185px;top:30px;width:144px;height:12px;background:#2d2b3c"></div>
<div class="a" style="left:185px;top:41.5px;width:144px;height:1px;background:#272436"></div>
<div class="a" style="left:185px;top:42px;width:144px;height:12px;background:#2d2b3c"></div>
<div class="a" style="left:185px;top:54px;width:144px;height:12px;background:#242131"></div>
<div class="a" style="left:185px;top:66px;width:144px;height:12px;background:#2d2b3c"></div>
<div class="a" style="left:185px;top:78px;width:144px;height:12px;background:#242131"></div>
<div class="a" style="left:185px;top:90px;width:144px;height:12px;background:#2d2b3c"></div>
<div class="a" style="left:185px;top:102px;width:144px;height:12px;background:#242131"></div>
<div class="a" style="left:185px;top:114px;width:144px;height:12px;background:#2d2b3c"></div>
<div class="a" style="left:185px;top:125.5px;width:144px;height:1px;background:#272436"></div>
<div class="a" style="left:185px;top:126px;width:144px;height:12px;background:#2d2b3c"></div>
<div class="a" style="left:185px;top:138px;width:144px;height:12px;background:#242131"></div>
<div class="a" style="left:185px;top:150px;width:144px;height:12px;background:#2d2b3c"></div>
<div class="a" style="left:185px;top:162px;width:144px;height:12px;background:#242131"></div>
<div class="a" style="left:185px;top:174px;width:144px;height:12px;background:#2d2b3c"></div>
<div class="a" style="left:185px;top:185.5px;width:144px;height:1px;background:#272436"></div>
<div class="a" style="left:185px;top:186px;width:144px;height:12px;background:#2d2b3c"></div>
<div class="a" style="left:185px;top:198px;width:144px;height:12px;background:#242131"></div>
<div class="a" style="left:185px;top:210px;width:144px;height:12px;background:#2d2b3c"></div>
<div class="a" style="left:185px;top:222px;width:144px;height:12px;background:#242131"></div>
<div class="a" style="left:185px;top:234px;width:144px;height:12px;background:#2d2b3c"></div>
<div class="a" style="left:185px;top:246px;width:144px;height:12px;background:#242131"></div>
<div class="a" style="left:185px;top:258px;width:144px;height:12px;background:#2d2b3c"></div>
<div class="a" style="left:185px;top:269.5px;width:144px;height:1px;background:#272436"></div>
<div class="a" style="left:185px;top:270px;width:144px;height:12px;background:#2d2b3c"></div>
<div class="a" style="left:185px;top:282px;width:144px;height:12px;background:#242131"></div>
<div class="a" style="left:185px;top:294px;width:144px;height:12px;background:#2d2b3c"></div>
<div class="a" style="left:329px;top:15px;width:288px;height:3px;background:#262a3d"></div>
<div class="a" style="left:329px;top:18px;width:288px;height:12px;background:#1e2133"></div>
<div class="a" style="left:329px;top:30px;width:288px;height:12px;background:#262a3d"></div>
<div class="a" style="left:329px;top:41.5px;width:288px;height:1px;background:#202335"></div>
<div class="a" style="left:329px;top:42px;width:288px;height:12px;background:#262a3d"></div>
<div class="a" style="left:329px;top:54px;width:288px;height:12px;background:#1e2133"></div>
<div class="a" style="left:329px;top:66px;width:288px;height:12px;background:#262a3d"></div>
<div class="a" style="left:329px;top:78px;width:288px;height:12px;background:#1e2133"></div>
<div class="a" style="left:329px;top:90px;width:288px;height:12px;background:#262a3d"></div>
<div class="a" style="left:329px;top:102px;width:288px;height:12px;background:#1e2133"></div>
<div class="a" style="left:329px;top:114px;width:288px;height:12px;background:#262a3d"></div>
<div class="a" style="left:329px;top:125.5px;width:288px;height:1px;background:#202335"></div>
<div class="a" style="left:329px;top:126px;width:288px;height:12px;background:#262a3d"></div>
<div class="a" style="left:329px;top:138px;width:288px;height:12px;background:#1e2133"></div>
<div class="a" style="left:329px;top:150px;width:288px;height:12px;background:#262a3d"></div>
<div class="a" style="left:329px;top:162px;width:288px;height:12px;background:#1e2133"></div>
<div class="a" style="left:329px;top:174px;width:288px;height:12px;background:#262a3d"></div>
<div class="a" style="left:329px;top:185.5px;width:288px;height:1px;background:#202335"></div>
<div class="a" style="left:329px;top:186px;width:288px;height:12px;background:#262a3d"></div>
<div class="a" style="left:329px;top:198px;width:288px;height:12px;background:#1e2133"></div>
<div class="a" style="left:329px;top:210px;width:288px;height:12px;background:#262a3d"></div>
<div class="a" style="left:329px;top:222px;width:288px;height:12px;background:#1e2133"></div>
<div class="a" style="left:329px;top:234px;width:288px;height:12px;background:#262a3d"></div>
<div class="a" style="left:329px;top:246px;width:288px;height:12px;background:#1e2133"></div>
<div class="a" style="left:329px;top:258px;width:288px;height:12px;background:#262a3d"></div>
<div class="a" style="left:329px;top:269.5px;width:288px;height:1px;background:#202335"></div>
<div class="a" style="left:329px;top:270px;width:288px;height:12px;background:#262a3d"></div>
<div class="a" style="left:329px;top:282px;width:288px;height:12px;background:#1e2133"></div>
<div class="a" style="left:329px;top:294px;width:288px;height:12px;background:#262a3d"></div>
<div class="a" style="left:617px;top:15px;width:92px;height:3px;background:#1b1d2a"></div>
<div class="a" style="left:617px;top:18px;width:92px;height:12px;background:#151723"></div>
<div class="a" style="left:617px;top:30px;width:92px;height:12px;background:#1b1d2a"></div>
<div class="a" style="left:617px;top:41.5px;width:92px;height:1px;background:#181a26"></div>
<div class="a" style="left:617px;top:42px;width:92px;height:12px;background:#1b1d2a"></div>
<div class="a" style="left:617px;top:54px;width:92px;height:12px;background:#151723"></div>
<div class="a" style="left:617px;top:66px;width:92px;height:12px;background:#1b1d2a"></div>
<div class="a" style="left:617px;top:78px;width:92px;height:12px;background:#151723"></div>
<div class="a" style="left:617px;top:90px;width:92px;height:12px;background:#1b1d2a"></div>
<div class="a" style="left:617px;top:102px;width:92px;height:12px;background:#151723"></div>
<div class="a" style="left:617px;top:114px;width:92px;height:12px;background:#1b1d2a"></div>
<div class="a" style="left:617px;top:125.5px;width:92px;height:1px;background:#181a26"></div>
<div class="a" style="left:617px;top:126px;width:92px;height:12px;background:#1b1d2a"></div>
<div class="a" style="left:617px;top:138px;width:92px;height:12px;background:#151723"></div>
<div class="a" style="left:617px;top:150px;width:92px;height:12px;background:#1b1d2a"></div>
<div class="a" style="left:617px;top:162px;width:92px;height:12px;background:#151723"></div>
<div class="a" style="left:617px;top:174px;width:92px;height:12px;background:#1b1d2a"></div>
<div class="a" style="left:617px;top:185.5px;width:92px;height:1px;background:#181a26"></div>
<div class="a" style="left:617px;top:186px;width:92px;height:12px;background:#1b1d2a"></div>
<div class="a" style="left:617px;top:198px;width:92px;height:12px;background:#151723"></div>
<div class="a" style="left:617px;top:210px;width:92px;height:12px;background:#1b1d2a"></div>
<div class="a" style="left:617px;top:222px;width:92px;height:12px;background:#151723"></div>
<div class="a" style="left:617px;top:234px;width:92px;height:12px;background:#1b1d2a"></div>
<div class="a" style="left:617px;top:246px;width:92px;height:12px;background:#151723"></div>
<div class="a" style="left:617px;top:258px;width:92px;height:12px;background:#1b1d2a"></div>
<div class="a" style="left:617px;top:269.5px;width:92px;height:1px;background:#181a26"></div>
<div class="a" style="left:617px;top:270px;width:92px;height:12px;background:#1b1d2a"></div>
<div class="a" style="left:617px;top:282px;width:92px;height:12px;background:#151723"></div>
<div class="a" style="left:617px;top:294px;width:92px;height:12px;background:#1b1d2a"></div>
<div class="a" style="left:77px;top:15px;width:1px;height:291px;background:#1a1c2b"></div>
<div class="a" style="left:113px;top:15px;width:1px;height:291px;background:#1a1c2b"></div>
<div class="a" style="left:149px;top:15px;width:1px;height:291px;background:#1a1c2b"></div>
<div class="a" style="left:221px;top:15px;width:1px;height:291px;background:#1a1c2b"></div>
<div class="a" style="left:257px;top:15px;width:1px;height:291px;background:#1a1c2b"></div>
<div class="a" style="left:293px;top:15px;width:1px;height:291px;background:#1a1c2b"></div>
<div class="a" style="left:365px;top:15px;width:1px;height:291px;background:#1a1c2b"></div>
<div class="a" style="left:401px;top:15px;width:1px;height:291px;background:#1a1c2b"></div>
<div class="a" style="left:437px;top:15px;width:1px;height:291px;background:#1a1c2b"></div>
<div class="a" style="left:509px;top:15px;width:1px;height:291px;background:#1a1c2b"></div>
<div class="a" style="left:545px;top:15px;width:1px;height:291px;background:#1a1c2b"></div>
<div class="a" style="left:581px;top:15px;width:1px;height:291px;background:#1a1c2b"></div>
<div class="a" style="left:185px;top:15px;width:1px;height:291px;background:#8c8c9c"></div>
<div class="a" style="left:329px;top:15px;width:1px;height:291px;background:#8c8c9c"></div>
<div class="a" style="left:473px;top:15px;width:1px;height:291px;background:#8c8c9c"></div>
<div class="a" style="left:617px;top:15px;width:1px;height:291px;background:#8c8c9c"></div>
<div class="a" style="left:41px;top:15px;width:1px;height:291px;background:#5fd9a0"></div>
<div class="t" style="left:41px;top:7.5px;transform:translate(-50%,-50%);color:#d0d0dc;font-size:11px;font-weight:bold;-webkit-text-stroke:0">1</div>
<div class="t" style="left:77px;top:8px;transform:translate(-50%,-50%);color:#7c7e90;font-size:8px;-webkit-text-stroke:0">1.2</div>
<div class="t" style="left:113px;top:8px;transform:translate(-50%,-50%);color:#7c7e90;font-size:8px;-webkit-text-stroke:0">1.3</div>
<div class="t" style="left:149px;top:8px;transform:translate(-50%,-50%);color:#7c7e90;font-size:8px;-webkit-text-stroke:0">1.4</div>
<div class="t" style="left:185px;top:7.5px;transform:translate(-50%,-50%);color:#d0d0dc;font-size:11px;font-weight:bold;-webkit-text-stroke:0">2</div>
<div class="t" style="left:221px;top:8px;transform:translate(-50%,-50%);color:#7c7e90;font-size:8px;-webkit-text-stroke:0">2.2</div>
<div class="t" style="left:257px;top:8px;transform:translate(-50%,-50%);color:#7c7e90;font-size:8px;-webkit-text-stroke:0">2.3</div>
<div class="t" style="left:293px;top:8px;transform:translate(-50%,-50%);color:#7c7e90;font-size:8px;-webkit-text-stroke:0">2.4</div>
<div class="t" style="left:329px;top:7.5px;transform:translate(-50%,-50%);color:#d0d0dc;font-size:11px;font-weight:bold;-webkit-text-stroke:0">3</div>
<div class="t" style="left:365px;top:8px;transform:translate(-50%,-50%);color:#7c7e90;font-size:8px;-webkit-text-stroke:0">3.2</div>
<div class="t" style="left:401px;top:8px;transform:translate(-50%,-50%);color:#7c7e90;font-size:8px;-webkit-text-stroke:0">3.3</div>
<div class="t" style="left:437px;top:8px;transform:translate(-50%,-50%);color:#7c7e90;font-size:8px;-webkit-text-stroke:0">3.4</div>
<div class="t" style="left:473px;top:7.5px;transform:translate(-50%,-50%);color:#d0d0dc;font-size:11px;font-weight:bold;-webkit-text-stroke:0">4</div>
<div class="t" style="left:509px;top:8px;transform:translate(-50%,-50%);color:#7c7e90;font-size:8px;-webkit-text-stroke:0">4.2</div>
<div class="t" style="left:545px;top:8px;transform:translate(-50%,-50%);color:#7c7e90;font-size:8px;-webkit-text-stroke:0">4.3</div>
<div class="t" style="left:581px;top:8px;transform:translate(-50%,-50%);color:#7c7e90;font-size:8px;-webkit-text-stroke:0">4.4</div>
<div class="t" style="left:617px;top:7.5px;transform:translate(-50%,-50%);color:#d0d0dc;font-size:11px;font-weight:bold;-webkit-text-stroke:0">5</div>
<div class="a" style="left:173px;top:16px;width:24px;height:13px;border-radius:7px;background:rgba(70,70,90,0.55)"></div>
<svg class="a" style="left:173px;top:16px" width="24" height="13" viewBox="0 0 24 13"><path d="M8 3.5 L5.5 6.5 L8 9.5" fill="none" stroke="#b8b8c8" stroke-width="1"/><path d="M16 3.5 L18.5 6.5 L16 9.5" fill="none" stroke="#b8b8c8" stroke-width="1"/></svg>
<div class="a" style="left:317px;top:16px;width:24px;height:13px;border-radius:7px;background:rgba(70,70,90,0.55)"></div>
<svg class="a" style="left:317px;top:16px" width="24" height="13" viewBox="0 0 24 13"><path d="M8 3.5 L5.5 6.5 L8 9.5" fill="none" stroke="#b8b8c8" stroke-width="1"/><path d="M16 3.5 L18.5 6.5 L16 9.5" fill="none" stroke="#b8b8c8" stroke-width="1"/></svg>
<div class="a" style="left:461px;top:16px;width:24px;height:13px;border-radius:7px;background:rgba(70,70,90,0.55)"></div>
<svg class="a" style="left:461px;top:16px" width="24" height="13" viewBox="0 0 24 13"><path d="M8 3.5 L5.5 6.5 L8 9.5" fill="none" stroke="#b8b8c8" stroke-width="1"/><path d="M16 3.5 L18.5 6.5 L16 9.5" fill="none" stroke="#b8b8c8" stroke-width="1"/></svg>
<div class="a" style="left:605px;top:16px;width:24px;height:13px;border-radius:7px;background:rgba(70,70,90,0.55)"></div>
<svg class="a" style="left:605px;top:16px" width="24" height="13" viewBox="0 0 24 13"><path d="M8 3.5 L5.5 6.5 L8 9.5" fill="none" stroke="#b8b8c8" stroke-width="1"/><path d="M16 3.5 L18.5 6.5 L16 9.5" fill="none" stroke="#b8b8c8" stroke-width="1"/></svg>
<div class="a" style="left:1px;top:15px;width:39px;height:291px;background:#b6b8c6;overflow:hidden">
<div class="a" style="left:0;top:314.50px;width:39px;height:1.2px;background:#4c4e5e"></div>
<div class="a" style="left:0;top:293.93px;width:39px;height:1.2px;background:#4c4e5e"></div>
<div class="a" style="left:0;top:273.36px;width:39px;height:1.2px;background:#4c4e5e"></div>
<div class="a" style="left:0;top:252.79px;width:39px;height:1.2px;background:#4c4e5e"></div>
<div class="a" style="left:0;top:232.21px;width:39px;height:1.2px;background:#4c4e5e"></div>
<div class="a" style="left:0;top:211.64px;width:39px;height:1.2px;background:#4c4e5e"></div>
<div class="a" style="left:0;top:191.07px;width:39px;height:1.2px;background:#4c4e5e"></div>
<div class="a" style="left:0;top:170.50px;width:39px;height:1.2px;background:#4c4e5e"></div>
<div class="a" style="left:0;top:149.93px;width:39px;height:1.2px;background:#4c4e5e"></div>
<div class="a" style="left:0;top:129.36px;width:39px;height:1.2px;background:#4c4e5e"></div>
<div class="a" style="left:0;top:108.79px;width:39px;height:1.2px;background:#4c4e5e"></div>
<div class="a" style="left:0;top:88.21px;width:39px;height:1.2px;background:#4c4e5e"></div>
<div class="a" style="left:0;top:67.64px;width:39px;height:1.2px;background:#4c4e5e"></div>
<div class="a" style="left:0;top:47.07px;width:39px;height:1.2px;background:#4c4e5e"></div>
<div class="a" style="left:0;top:26.50px;width:39px;height:1.2px;background:#4c4e5e"></div>
<div class="a" style="left:0;top:5.93px;width:39px;height:1.2px;background:#4c4e5e"></div>
<div class="a" style="left:0;top:-14.64px;width:39px;height:1.2px;background:#4c4e5e"></div>
<div class="a" style="left:0;top:2px;width:20px;height:14px;background:#1e2031;border-radius:0 3px 3px 0"></div>
<div class="a" style="left:0;top:38px;width:20px;height:14px;background:#1e2031;border-radius:0 3px 3px 0"></div>
<div class="a" style="left:0;top:62px;width:20px;height:14px;background:#1e2031;border-radius:0 3px 3px 0"></div>
<div class="a" style="left:0;top:86px;width:20px;height:14px;background:#1e2031;border-radius:0 3px 3px 0"></div>
<div class="a" style="left:0;top:122px;width:20px;height:14px;background:#1e2031;border-radius:0 3px 3px 0"></div>
<div class="a" style="left:0;top:146px;width:20px;height:14px;background:#1e2031;border-radius:0 3px 3px 0"></div>
<div class="a" style="left:0;top:182px;width:20px;height:14px;background:#1e2031;border-radius:0 3px 3px 0"></div>
<div class="a" style="left:0;top:206px;width:20px;height:14px;background:#1e2031;border-radius:0 3px 3px 0"></div>
<div class="a" style="left:0;top:230px;width:20px;height:14px;background:#1e2031;border-radius:0 3px 3px 0"></div>
<div class="a" style="left:0;top:266px;width:20px;height:14px;background:#1e2031;border-radius:0 3px 3px 0"></div>
<div class="t" style="right:1px;top:12.5px;color:#2a2c3a;font-size:11px;line-height:12px;transform:scaleX(0.8);transform-origin:100% 50%">C3</div>
<div class="t" style="right:1px;top:157.5px;color:#2a2c3a;font-size:11px;line-height:12px;transform:scaleX(0.8);transform-origin:100% 50%">C2</div>
</div>
<div class="a" style="left:42px;top:176px;width:34px;height:8px;background:#85232a;border-radius:2px"></div>
<div class="a" style="left:42px;top:176px;width:18px;height:8px;background:#dc4650;border-radius:2px"></div>
<div class="a" style="left:78px;top:236px;width:35px;height:8px;background:#85232a;border-radius:2px"></div>
<div class="a" style="left:78px;top:236px;width:10px;height:8px;background:#dc4650;border-radius:2px"></div>
<div class="a" style="left:114px;top:284px;width:35px;height:8px;background:#85232a;border-radius:2px"></div>
<div class="a" style="left:114px;top:284px;width:17px;height:8px;background:#dc4650;border-radius:2px"></div>
<div class="a" style="left:150px;top:236px;width:35px;height:8px;background:#85232a;border-radius:2px"></div>
<div class="a" style="left:150px;top:236px;width:18px;height:8px;background:#dc4650;border-radius:2px"></div>
<div class="a" style="left:186px;top:56px;width:33px;height:8px;background:#85232a;border-radius:2px"></div>
<div class="a" style="left:186px;top:56px;width:17px;height:8px;background:#dc4650;border-radius:2px"></div>
<div class="a" style="left:222px;top:56px;width:35px;height:8px;background:#85232a;border-radius:2px"></div>
<div class="a" style="left:222px;top:56px;width:14px;height:8px;background:#dc4650;border-radius:2px"></div>
<div class="a" style="left:258px;top:152px;width:34px;height:8px;background:#85232a;border-radius:2px"></div>
<div class="a" style="left:258px;top:152px;width:18px;height:8px;background:#dc4650;border-radius:2px"></div>
<div class="a" style="left:294px;top:56px;width:35px;height:8px;background:#85232a;border-radius:2px"></div>
<div class="a" style="left:294px;top:56px;width:18px;height:8px;background:#dc4650;border-radius:2px"></div>
<div class="a" style="left:330px;top:140px;width:34px;height:8px;background:#85232a;border-radius:2px"></div>
<div class="a" style="left:330px;top:140px;width:18px;height:8px;background:#dc4650;border-radius:2px"></div>
<div class="a" style="left:366px;top:236px;width:35px;height:8px;background:#85232a;border-radius:2px"></div>
<div class="a" style="left:366px;top:236px;width:10px;height:8px;background:#dc4650;border-radius:2px"></div>
<div class="a" style="left:402px;top:140px;width:35px;height:8px;background:#85232a;border-radius:2px"></div>
<div class="a" style="left:402px;top:140px;width:17px;height:8px;background:#dc4650;border-radius:2px"></div>
<div class="a" style="left:438px;top:236px;width:35px;height:8px;background:#85232a;border-radius:2px"></div>
<div class="a" style="left:438px;top:236px;width:18px;height:8px;background:#dc4650;border-radius:2px"></div>
<div class="a" style="left:474px;top:116px;width:33px;height:8px;background:#85232a;border-radius:2px"></div>
<div class="a" style="left:474px;top:116px;width:18px;height:8px;background:#dc4650;border-radius:2px"></div>
<div class="a" style="left:510px;top:116px;width:33px;height:8px;background:#85232a;border-radius:2px"></div>
<div class="a" style="left:510px;top:116px;width:13px;height:8px;background:#dc4650;border-radius:2px"></div>
<div class="a" style="left:546px;top:116px;width:33px;height:8px;background:#85232a;border-radius:2px"></div>
<div class="a" style="left:546px;top:116px;width:12px;height:8px;background:#dc4650;border-radius:2px"></div>
<div class="a" style="left:582px;top:116px;width:35px;height:8px;background:#85232a;border-radius:2px"></div>
<div class="a" style="left:582px;top:116px;width:19px;height:8px;background:#dc4650;border-radius:2px"></div>
<div class="a" style="left:0;top:306px;width:709px;height:58px;background:#171a2b"></div>
<div class="a" style="left:0;top:306px;width:709px;height:1px;background:#585a6e"></div>
<div class="a" style="left:0;top:307px;width:1px;height:57px;background:#34364a"></div>
<div class="a" style="left:41px;top:307px;width:1px;height:57px;background:#5a5c70"></div>
<div class="a" style="left:59px;top:307px;width:1px;height:57px;background:#2c2f44"></div>
<div class="a" style="left:77px;top:307px;width:1px;height:57px;background:#2c2f44"></div>
<div class="a" style="left:95px;top:307px;width:1px;height:57px;background:#2c2f44"></div>
<div class="a" style="left:113px;top:307px;width:1px;height:57px;background:#2c2f44"></div>
<div class="a" style="left:131px;top:307px;width:1px;height:57px;background:#2c2f44"></div>
<div class="a" style="left:149px;top:307px;width:1px;height:57px;background:#2c2f44"></div>
<div class="a" style="left:167px;top:307px;width:1px;height:57px;background:#2c2f44"></div>
<div class="a" style="left:185px;top:307px;width:1px;height:57px;background:#8c8c9c"></div>
<div class="a" style="left:203px;top:307px;width:1px;height:57px;background:#2c2f44"></div>
<div class="a" style="left:221px;top:307px;width:1px;height:57px;background:#2c2f44"></div>
<div class="a" style="left:239px;top:307px;width:1px;height:57px;background:#2c2f44"></div>
<div class="a" style="left:257px;top:307px;width:1px;height:57px;background:#2c2f44"></div>
<div class="a" style="left:275px;top:307px;width:1px;height:57px;background:#2c2f44"></div>
<div class="a" style="left:293px;top:307px;width:1px;height:57px;background:#2c2f44"></div>
<div class="a" style="left:311px;top:307px;width:1px;height:57px;background:#2c2f44"></div>
<div class="a" style="left:329px;top:307px;width:1px;height:57px;background:#8c8c9c"></div>
<div class="a" style="left:347px;top:307px;width:1px;height:57px;background:#2c2f44"></div>
<div class="a" style="left:365px;top:307px;width:1px;height:57px;background:#2c2f44"></div>
<div class="a" style="left:383px;top:307px;width:1px;height:57px;background:#2c2f44"></div>
<div class="a" style="left:401px;top:307px;width:1px;height:57px;background:#2c2f44"></div>
<div class="a" style="left:419px;top:307px;width:1px;height:57px;background:#2c2f44"></div>
<div class="a" style="left:437px;top:307px;width:1px;height:57px;background:#2c2f44"></div>
<div class="a" style="left:455px;top:307px;width:1px;height:57px;background:#2c2f44"></div>
<div class="a" style="left:473px;top:307px;width:1px;height:57px;background:#8c8c9c"></div>
<div class="a" style="left:491px;top:307px;width:1px;height:57px;background:#2c2f44"></div>
<div class="a" style="left:509px;top:307px;width:1px;height:57px;background:#2c2f44"></div>
<div class="a" style="left:527px;top:307px;width:1px;height:57px;background:#2c2f44"></div>
<div class="a" style="left:545px;top:307px;width:1px;height:57px;background:#2c2f44"></div>
<div class="a" style="left:563px;top:307px;width:1px;height:57px;background:#2c2f44"></div>
<div class="a" style="left:581px;top:307px;width:1px;height:57px;background:#2c2f44"></div>
<div class="a" style="left:599px;top:307px;width:1px;height:57px;background:#2c2f44"></div>
<div class="a" style="left:617px;top:307px;width:1px;height:57px;background:#8c8c9c"></div>
<div class="a" style="left:41px;top:318px;width:668px;height:1px;background:#262a3e"></div>
<div class="a" style="left:41px;top:329.5px;width:668px;height:1px;background:#262a3e"></div>
<div class="a" style="left:41px;top:341px;width:668px;height:1px;background:#262a3e"></div>
<div class="a" style="left:41px;top:352.5px;width:668px;height:1px;background:#262a3e"></div>
<div class="a" style="left:41px;top:357px;width:517px;height:7px;background:#3a3c4c;border-radius:0 4px 4px 0"></div>
<div class="a" style="left:41px;top:327.6px;width:5px;height:36.39999999999998px;background:#68e0a6"></div>
<div class="a" style="left:77px;top:339.70000000000005px;width:5px;height:24.299999999999955px;background:#68e0a6"></div>
<div class="a" style="left:113px;top:330.70000000000005px;width:5px;height:33.299999999999955px;background:#68e0a6"></div>
<div class="a" style="left:149px;top:329.5px;width:5px;height:34.5px;background:#68e0a6"></div>
<div class="a" style="left:185px;top:329.5px;width:5px;height:34.5px;background:#68e0a6"></div>
<div class="a" style="left:221px;top:335.5px;width:5px;height:28.5px;background:#68e0a6"></div>
<div class="a" style="left:257px;top:330.70000000000005px;width:5px;height:33.299999999999955px;background:#68e0a6"></div>
<div class="a" style="left:293px;top:330.70000000000005px;width:5px;height:33.299999999999955px;background:#68e0a6"></div>
<div class="a" style="left:329px;top:329px;width:5px;height:35px;background:#68e0a6"></div>
<div class="a" style="left:365px;top:340.9px;width:5px;height:23.100000000000023px;background:#68e0a6"></div>
<div class="a" style="left:401px;top:332.70000000000005px;width:5px;height:31.299999999999955px;background:#68e0a6"></div>
<div class="a" style="left:437px;top:329.79999999999995px;width:5px;height:34.200000000000045px;background:#68e0a6"></div>
<div class="a" style="left:473px;top:329px;width:5px;height:35px;background:#68e0a6"></div>
<div class="a" style="left:509px;top:335.79999999999995px;width:5px;height:28.200000000000045px;background:#68e0a6"></div>
<div class="a" style="left:545px;top:337px;width:5px;height:27px;background:#68e0a6"></div>
<div class="a" style="left:581px;top:332.70000000000005px;width:5px;height:31.299999999999955px;background:#68e0a6"></div>
</div>
<div class="a" style="left:1031px;top:483px;width:6px;height:77px;border-radius:3px;background:#303348"></div>
<div class="a" style="left:893px;top:606px;width:155px;height:26px;background:#272a3c;clip-path:polygon(0 100%,12px 0,100% 0,100% 100%)"></div>
<svg class="a" style="left:909px;top:609px" width="34" height="13" viewBox="0 0 34 13">
<circle cx="6.5" cy="6.5" r="5.5" fill="#c4c4d0"/><path d="M3.5 6.5 H9.5" stroke="#272a3c" stroke-width="1.8"/>
<circle cx="28" cy="6.5" r="5.5" fill="#c4c4d0"/><path d="M25 6.5 H31 M28 3.5 V9.5" stroke="#272a3c" stroke-width="1.8"/>
</svg>
<div class="t" style="left:954px;top:610.5px;color:#7c7e90;font-size:10px;-webkit-text-stroke:0">STEP:</div>
<div class="t" style="left:993px;top:609px;color:#e4e4ec;font-size:12px;-webkit-text-stroke:0">1/4</div>
<div class="a" style="left:986px;top:620px;width:51px;height:1px;background:#34374b"></div>
<div class="a" style="left:895px;top:518px;width:127px;height:73px;background:#1a1c2f;border:1px solid #36384c;border-radius:5px;overflow:hidden"><div style="height:19px;background:#2d3045;color:#c4454f;font-size:10.5px;text-align:center;line-height:19px">Drag to your DAW</div></div>
<div class="a" style="left:906px;top:560px;width:6px;height:1.5px;background:#7c7e8e"></div>
<div class="a" style="left:914px;top:569px;width:6px;height:1.5px;background:#7c7e8e"></div>
<div class="a" style="left:930px;top:569px;width:6px;height:1.5px;background:#7c7e8e"></div>
<div class="a" style="left:921px;top:577px;width:6px;height:1.5px;background:#7c7e8e"></div>
<div class="a" style="left:955px;top:555px;width:6px;height:1.5px;background:#7c7e8e"></div>
<div class="a" style="left:971px;top:553px;width:6px;height:1.5px;background:#7c7e8e"></div>
<div class="a" style="left:987px;top:553px;width:6px;height:1.5px;background:#7c7e8e"></div>
<div class="a" style="left:1004px;top:550px;width:6px;height:1.5px;background:#7c7e8e"></div>
<div class="a" style="left:977px;top:569px;width:6px;height:1.5px;background:#7c7e8e"></div>
<div class="a" style="left:995px;top:569px;width:6px;height:1.5px;background:#7c7e8e"></div>
<svg class="a" style="left:1036px;top:618px" width="24" height="24" viewBox="0 0 24 24"><path d="M4 24 L24 4 M10 24 L24 10 M16 24 L24 16" stroke="#6a6c80" stroke-width="1.2"/></svg></body></html>
